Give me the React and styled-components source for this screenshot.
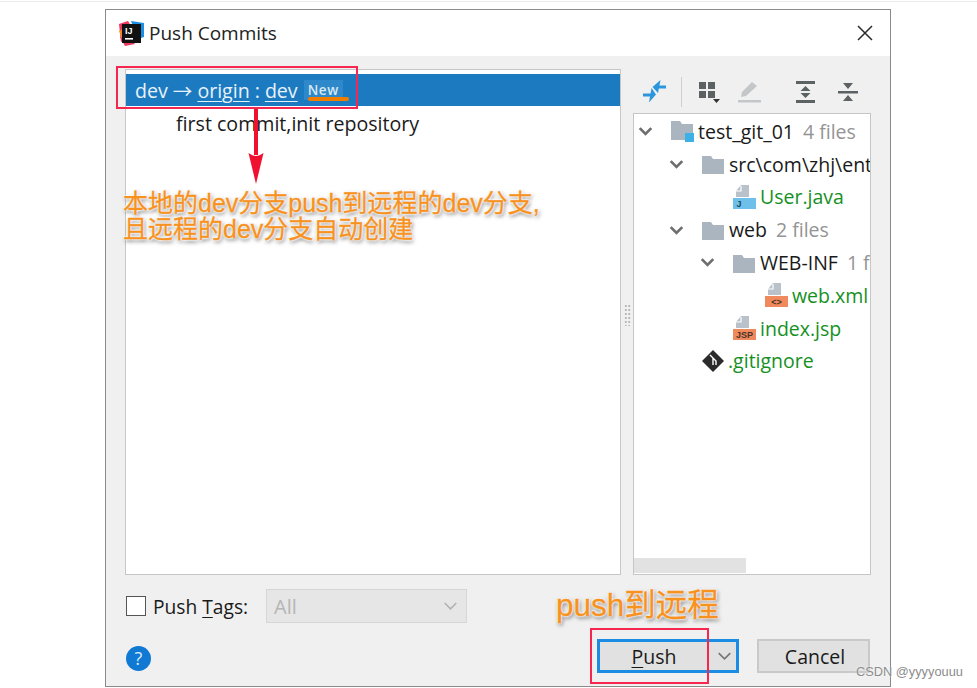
import styled, { createGlobalStyle } from "styled-components";

const GlobalStyle = createGlobalStyle`
  html, body {
    margin: 0;
    padding: 0;
    background: #fff;
    overflow: hidden;
  }
`;

const uiFont = `"Open Sans", "Noto Sans", "Noto Sans CJK SC", sans-serif`;

const Page = styled.div`
  width: 977px;
  height: 688px;
  box-sizing: border-box;
  padding: 9px 0 0 105px;
  border-top: 1px solid #ededed;
  margin-top: 1px;
  overflow: hidden;
  font-family: ${uiFont};
  position: relative;
`;

const Dialog = styled.div`
  position: relative;
  width: 786px;
  height: 678px;
  box-sizing: border-box;
  margin-top: -2px;
  border: 1px solid #8a8a8a;
  background: #f0f0f0;
  display: flex;
  flex-direction: column;
`;

const TitleBar = styled.div`
  height: 46px;
  background: #fff;
  display: flex;
  align-items: center;
  padding: 0 17px 0 13px;
  gap: 5px;
  flex: none;
`;

const Title = styled.div`
  flex: 1;
  font-size: 19px;
  color: #222;
`;

const Body = styled.div`
  flex: 1;
  display: flex;
  flex-direction: column;
  padding: 13px 19px 0 19px;
  min-height: 0;
`;

const Main = styled.div`
  display: flex;
  height: 506px;
  flex: none;
`;

const CommitPanel = styled.div`
  width: 496px;
  box-sizing: border-box;
  background: #fff;
  border: 1px solid #c6c6c6;
  padding-top: 4px;
  flex: none;
`;

const BranchRow = styled.div`
  height: 32px;
  background: #1c7ac1;
  color: #e8f2fa;
  display: flex;
  align-items: center;
  padding-left: 9px;
  font-size: 19.6px;
  gap: 5px;
`;

const BranchLink = styled.span`
  text-decoration: underline;
  text-underline-offset: 3px;
  text-decoration-thickness: 1px;
`;

const NewBadge = styled.span`
  font-size: 13.5px;
  font-weight: 600;
  letter-spacing: 0.6px;
  padding: 1px 4px;
  margin-left: 1px;
  color: #d7e8f5;
  background: #2f88ca;
`;

const CommitRow = styled.div`
  height: 34px;
  display: flex;
  align-items: center;
  padding-left: 50px;
  font-size: 19.6px;
  color: #1a1a1a;
`;

const Splitter = styled.div`
  width: 12px;
  flex: none;
  display: flex;
  align-items: center;
  justify-content: center;
`;

const SplitterDots = styled.div`
  width: 7px;
  height: 22px;
  margin-bottom: 14px;
  background-image: radial-gradient(circle, #b4b4b4 1px, transparent 1.2px);
  background-size: 3.5px 4px;
`;

const RightColumn = styled.div`
  flex: 1;
  display: flex;
  flex-direction: column;
  min-width: 0;
`;

const Toolbar = styled.div`
  height: 44px;
  display: flex;
  align-items: center;
  flex: none;
  padding-top: 1px;
  box-sizing: border-box;
`;

const ToolSlot = styled.div`
  width: ${(p) => p.$w}px;
  margin-left: ${(p) => p.$gap || 0}px;
  height: 30px;
  display: flex;
  align-items: center;
  justify-content: center;
  flex: none;
`;

const ToolDivider = styled.div`
  width: 1px;
  height: 30px;
  background: #cfcfcf;
  margin: 0 8px 0 4px;
`;

const TreePanel = styled.div`
  position: relative;
  flex: 1;
  background: #fff;
  border: 1px solid #c6c6c6;
  padding-top: 1px;
  overflow: hidden;
`;

const TreeRow = styled.div`
  height: 32.8px;
  display: flex;
  align-items: center;
  white-space: nowrap;
  padding-left: ${(p) => p.$indent}px;
  font-size: 19.5px;
  color: ${(p) => (p.$added ? "#16901f" : "#1a1a1a")};
`;

const Chevron = styled.div`
  width: 33px;
  flex: none;
  display: flex;
  align-items: center;
`;

const NodeIcon = styled.div`
  width: 27px;
  height: 24px;
  flex: none;
  display: flex;
  align-items: center;
`;

const Muted = styled.span`
  color: #949494;
  margin-left: 9px;
`;

const HScroll = styled.div`
  position: absolute;
  left: 0;
  bottom: 1px;
  width: 112px;
  height: 15px;
  background: #e2e2e2;
`;

const TagsRow = styled.div`
  display: flex;
  align-items: center;
  margin-top: 14px;
  height: 34px;
  flex: none;
`;

const Check = styled.div`
  width: 20px;
  height: 20px;
  margin-left: 1px;
  box-sizing: border-box;
  border: 1px solid #555;
  background: #fff;
  flex: none;
`;

const TagsLabel = styled.div`
  font-size: 19.2px;
  color: #1a1a1a;
  margin-left: 7px;
  width: 113px;
  flex: none;
`;

const Underlined = styled.span`
  text-decoration: underline;
  text-underline-offset: 3px;
  text-decoration-thickness: 1px;
`;

const Select = styled.div`
  width: 201px;
  height: 34px;
  box-sizing: border-box;
  background: #e6e6e6;
  border: 1px solid #d6d6d6;
  display: flex;
  align-items: center;
  justify-content: space-between;
  padding: 0 8px 0 7px;
  font-size: 20px;
  color: #b5b5b5;
`;

const ActionsRow = styled.div`
  display: flex;
  align-items: center;
  margin-top: 16px;
  height: 34px;
  flex: none;
`;

const HelpButton = styled.div`
  width: 25px;
  height: 25px;
  margin: 4px 0 0 1px;
  border-radius: 50%;
  background: #1079d4;
  color: #dbeaf7;
  font-size: 18px;
  display: flex;
  align-items: center;
  justify-content: center;
  flex: none;
`;

const PushButton = styled.div`
  margin-left: auto;
  width: 142px;
  height: 34px;
  box-sizing: border-box;
  border: 3px solid #1b8ce3;
  background: #e1e1e1;
  display: flex;
  align-items: center;
  font-size: 19.5px;
  color: #1a1a1a;
`;

const PushLabel = styled.div`
  flex: 1;
  text-align: center;
  padding-right: 4px;
`;

const PushArrow = styled.div`
  width: 24px;
  height: 100%;
  display: flex;
  align-items: center;
  justify-content: center;
  flex: none;
`;

const CancelButton = styled.div`
  width: 113px;
  height: 34px;
  box-sizing: border-box;
  margin: 0 1px 0 18px;
  padding-left: 3px;
  border: 2px solid #c9c9c9;
  background: #e1e1e1;
  display: flex;
  align-items: center;
  justify-content: center;
  font-size: 19.5px;
  color: #1a1a1a;
`;

const RedBox = styled.div`
  position: absolute;
  box-sizing: border-box;
  left: ${(p) => p.$x}px;
  top: ${(p) => p.$y}px;
  width: ${(p) => p.$w}px;
  height: ${(p) => p.$h}px;
  border: 2px solid #f5264f;
  pointer-events: none;
`;

const Callout = styled.div`
  position: absolute;
  left: ${(p) => p.$x}px;
  top: ${(p) => p.$y}px;
  font-family: "Liberation Sans", "Noto Sans CJK SC", sans-serif;
  font-size: ${(p) => p.$size}px;
  line-height: ${(p) => p.$size + 1}px;
  white-space: nowrap;
  color: #f7921e;
  -webkit-text-stroke: 0.3px #f7921e;
  text-shadow: 0 0 2px #fff, 0 0 3px #fff, 0 0 3px #fff, 1px 2px 4px rgba(0, 0, 0, 0.7);
`;

const NewUnderline = styled.div`
  position: absolute;
  left: 202px;
  top: 87px;
  width: 41px;
  height: 4px;
  border-radius: 2px;
  background: #f07d00;
`;

const Watermark = styled.div`
  position: absolute;
  left: 856px;
  top: 662px;
  font-family: "Liberation Sans", sans-serif;
  font-size: 12.8px;
  color: #8c8c8c;
  text-shadow: 0 0 2px #fff;
`;

const FolderIcon = () => (
  <svg width="22" height="20" viewBox="0 0 22 20">
    <path d="M0 2h9l2 3h11v15H0z" fill="#aab5bf" />
  </svg>
);

const ModuleIcon = () => (
  <svg width="24" height="24" viewBox="0 0 24 24">
    <path d="M0 2h9l2 3h11v16H0z" fill="#aab5bf" />
    <rect x="14" y="14" width="9" height="9" fill="#3db0e6" />
  </svg>
);

const ChevronIcon = ({ color = "#6e6e6e", size = 15, weight = 2.6 }) => (
  <svg width={size} height={size * 0.7} viewBox="0 0 14 10">
    <path d="M1.5 2l5.500 5.500L12.500 2" fill="none" stroke={color} strokeWidth={weight} />
  </svg>
);

const FileIcon = ({ band, label, labelColor = "#4a3328", labelX = 11.5 }) => (
  <svg width="24" height="24" viewBox="0 0 24 24">
    <path d="M8 0h8v12H3V6z" fill="#b9c2ca" />
    <path d="M8 1v5H3" fill="none" stroke="#fff" strokeWidth="1.2" />
    <rect x="0" y="13" width="23" height="11" fill={band} />
    <text x={labelX} y="22" fontSize="9" fontWeight="700" textAnchor="middle" fontFamily="Liberation Sans, sans-serif" fill={labelColor}>
      {label}
    </text>
  </svg>
);

const GitIcon = () => (
  <svg width="24" height="24" viewBox="0 0 24 24">
    <path d="M12 1l11 11-11 11L1 12z" fill="#2b2b2b" />
    <path d="M9 6l6 6v4M12 9v7" fill="none" stroke="#fff" strokeWidth="1.4" />
  </svg>
);

const LogoIcon = () => (
  <svg width="25" height="25" viewBox="0 0 25 25">
    <path d="M0 3l9-3 3 5-7 14-3 2z" fill="#f0355f" />
    <path d="M12 0l13 2v14l-6 2z" fill="#1a8fe3" />
    <path d="M1 16l5 9 10-2-8-9z" fill="#f0355f" />
    <path d="M0 10l4-2v12z" fill="#f58a1f" />
    <rect x="3" y="3" width="19" height="19" fill="#111" />
    <text x="6" y="13" fontSize="9" fontWeight="700" fontFamily="Liberation Sans, sans-serif" fill="#fff">
      IJ
    </text>
    <rect x="6" y="17" width="8" height="1.6" fill="#fff" />
  </svg>
);

const CloseIcon = () => (
  <svg width="16" height="16" viewBox="0 0 16 16">
    <path d="M1 1l14 14M15 1L1 15" stroke="#2a2a2a" strokeWidth="1.5" />
  </svg>
);

const CollapseArrows = () => (
  <svg width="24" height="24" viewBox="0 0 24 24">
    <rect x="0" y="13.500" width="8" height="3" fill="#2c96dd" />
    <path d="M8.500 8L6 22.500 13 14.500z" fill="#2c96dd" />
    <rect x="15" y="5.500" width="8" height="3" fill="#2c96dd" />
    <path d="M17.500 0L15 13 9.500 7z" fill="#2c96dd" />
  </svg>
);

const GroupIcon = () => (
  <svg width="24" height="24" viewBox="0 0 24 24">
    <rect x="1" y="2" width="7" height="7" fill="#5c6164" />
    <rect x="10" y="2" width="7" height="7" fill="#5c6164" />
    <rect x="1" y="11" width="7" height="7" fill="#5c6164" />
    <rect x="10" y="11" width="7" height="7" fill="#5c6164" />
    <path d="M15 19h7l-3.500 4z" fill="#333" />
  </svg>
);

const EditIcon = () => (
  <svg width="24" height="24" viewBox="0 0 24 24">
    <path d="M3 17l1-5L14 2l5 4L8 16z" fill="#c4c7c9" />
    <rect x="0" y="20" width="23" height="2.500" fill="#c4c7c9" />
  </svg>
);

const ExpandAllIcon = () => (
  <svg width="22" height="24" viewBox="0 0 22 24">
    <rect x="1" y="1" width="19" height="3" fill="#5c6164" />
    <rect x="1" y="20" width="19" height="3" fill="#5c6164" />
    <path d="M10.500 6l5 5h-10zM10.500 18l5-5h-10z" fill="#5c6164" />
  </svg>
);

const CollapseAllIcon = () => (
  <svg width="20" height="22" viewBox="0 0 20 22">
    <rect x="0" y="10" width="20" height="2.500" fill="#5c6164" />
    <path d="M10 8L5 2h10zM10 14l5 6H5z" fill="#5c6164" />
  </svg>
);

const App = () => (
  <>
    <GlobalStyle />
    <Page>
      <Dialog>
        <TitleBar>
          <LogoIcon />
          <Title>Push Commits</Title>
          <CloseIcon />
        </TitleBar>
        <Body>
          <Main>
            <CommitPanel>
              <BranchRow>
                <span>dev</span>
                <span>→</span>
                <BranchLink>origin</BranchLink>
                <span>:</span>
                <BranchLink>dev</BranchLink>
                <NewBadge>New</NewBadge>
              </BranchRow>
              <CommitRow>first commit,init repository</CommitRow>
            </CommitPanel>
            <Splitter>
              <SplitterDots />
            </Splitter>
            <RightColumn>
              <Toolbar>
                <ToolSlot $w={44}>
                  <CollapseArrows />
                </ToolSlot>
                <ToolDivider />
                <ToolSlot $w={40}>
                  <GroupIcon />
                </ToolSlot>
                <ToolSlot $w={40}>
                  <EditIcon />
                </ToolSlot>
                <ToolSlot $w={40} $gap={16}>
                  <ExpandAllIcon />
                </ToolSlot>
                <ToolSlot $w={44}>
                  <CollapseAllIcon />
                </ToolSlot>
              </Toolbar>
              <TreePanel>
                <TreeRow $indent={4}>
                  <Chevron><ChevronIcon /></Chevron>
                  <NodeIcon><ModuleIcon /></NodeIcon>
                  test_git_01<Muted>4 files</Muted>
                </TreeRow>
                <TreeRow $indent={35}>
                  <Chevron><ChevronIcon /></Chevron>
                  <NodeIcon><FolderIcon /></NodeIcon>
                  src\com\zhj\entity
                </TreeRow>
                <TreeRow $indent={99} $added>
                  <NodeIcon><FileIcon band="#6cc0ea" label="J" labelColor="#234a63" labelX={6} /></NodeIcon>
                  User.java
                </TreeRow>
                <TreeRow $indent={35}>
                  <Chevron><ChevronIcon /></Chevron>
                  <NodeIcon><FolderIcon /></NodeIcon>
                  web<Muted>2 files</Muted>
                </TreeRow>
                <TreeRow $indent={66}>
                  <Chevron><ChevronIcon /></Chevron>
                  <NodeIcon><FolderIcon /></NodeIcon>
                  WEB-INF<Muted>1 file</Muted>
                </TreeRow>
                <TreeRow $indent={131} $added>
                  <NodeIcon><FileIcon band="#f08a5d" label="<>" /></NodeIcon>
                  web.xml
                </TreeRow>
                <TreeRow $indent={99} $added>
                  <NodeIcon><FileIcon band="#f08a5d" label="JSP" /></NodeIcon>
                  index.jsp
                </TreeRow>
                <TreeRow $indent={67} $added>
                  <NodeIcon><GitIcon /></NodeIcon>
                  .gitignore
                </TreeRow>
                <HScroll />
              </TreePanel>
            </RightColumn>
          </Main>
          <TagsRow>
            <Check />
            <TagsLabel>
              Push <Underlined>T</Underlined>ags:
            </TagsLabel>
            <Select>
              All
              <ChevronIcon color="#b0b0b0" size={15} weight={1.4} />
            </Select>
          </TagsRow>
          <ActionsRow>
            <HelpButton>?</HelpButton>
            <PushButton>
              <PushLabel>
                <Underlined>P</Underlined>ush
              </PushLabel>
              <PushArrow>
                <ChevronIcon color="#777" size={15} weight={1.6} />
              </PushArrow>
            </PushButton>
            <CancelButton>Cancel</CancelButton>
          </ActionsRow>
        </Body>
        <NewUnderline />
        <RedBox $x={10} $y={56} $w={242} $h={43} />
        <RedBox $x={484} $y={618} $w={119} $h={56} />
        <svg
          width="24"
          height="80"
          viewBox="0 0 24 80"
          style={{ position: "absolute", left: 138, top: 99 }}
        >
          <path d="M10 0h4v46h-4z" fill="#f01030" />
          <path d="M4.500 44c3 2 5 3 7.500 3s4.500-1 7.500-3L12 75z" fill="#f01030" />
        </svg>
        <Callout $x={17} $y={180} $size={25}>
          本地的dev分支push到远程的dev分支,
          <br />
          且远程的dev分支自动创建
        </Callout>
        <Callout $x={450} $y={579} $size={31.5}>
          push到远程
        </Callout>
      </Dialog>
      <Watermark>CSDN @yyyyouuu</Watermark>
    </Page>
  </>
);

export default App;
